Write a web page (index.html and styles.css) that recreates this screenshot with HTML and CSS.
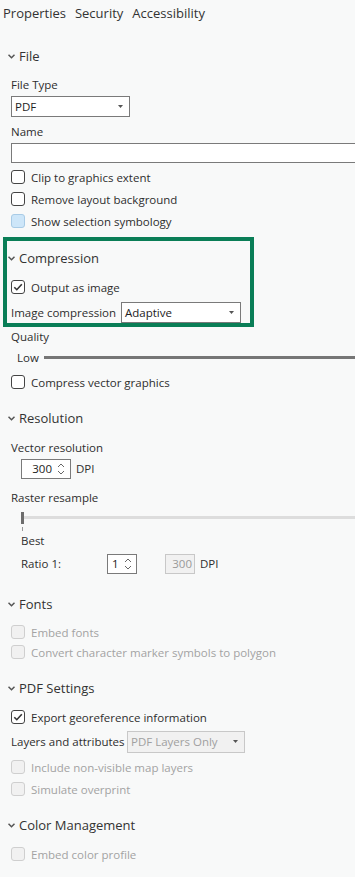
FILE: index.html
```html
<!DOCTYPE html>
<html>
<head>
<meta charset="utf-8">
<link rel="stylesheet" href="styles.css">
</head>
<body>
<div class="tabs"><span>Properties</span><span>Security</span><span>Accessibility</span></div>
<div class="content">

  <div class="heading m-file"><svg class="chev" viewBox="0 0 7 5"><path d="M0.5 0.8 L3.5 3.8 L6.5 0.8"/></svg><span>File</span></div>
  <div class="label m-8">File Type</div>
  <div class="select w-filetype m-3"><span>PDF</span><svg class="arrow" viewBox="0 0 5 3"><path d="M0 0 H5 L2.5 3 Z"/></svg></div>
  <div class="label m-5">Name</div>
  <div class="textinput m-3"></div>
  <div class="check m-3"><span class="box"></span><span>Clip to graphics extent</span></div>
  <div class="check"><span class="box"></span><span>Remove layout background</span></div>
  <div class="check"><span class="box box-blue"></span><span>Show selection symbology</span></div>

  <div class="highlight">
    <div class="heading m-6"><svg class="chev" viewBox="0 0 7 5"><path d="M0.5 0.8 L3.5 3.8 L6.5 0.8"/></svg><span>Compression</span></div>
    <div class="check m-7"><span class="box"><svg class="tick" viewBox="0 0 12 12"><path d="M2.3 6.2 L4.8 8.7 L9.8 3.3"/></svg></span><span>Output as image</span></div>
    <div class="inline m-4"><span class="inline-label w-imgcomp">Image compression</span><div class="select w-adaptive"><span>Adaptive</span><svg class="arrow" viewBox="0 0 5 3"><path d="M0 0 H5 L2.5 3 Z"/></svg></div></div>
  </div>

  <div class="label">Quality</div>
  <div class="lowslider m-1"><span>Low</span><span class="track-dark"></span></div>
  <div class="check m-3"><span class="box"></span><span>Compress vector graphics</span></div>

  <div class="heading m-14"><svg class="chev" viewBox="0 0 7 5"><path d="M0.5 0.8 L3.5 3.8 L6.5 0.8"/></svg><span>Resolution</span></div>
  <div class="label m-9">Vector resolution</div>
  <div class="inline m-2 indent">
    <div class="spin w-spin300"><span>300</span><svg class="updown" viewBox="0 0 8 14"><path d="M1 5 L4 2 L7 5 M1 9 L4 12 L7 9"/></svg></div>
    <span class="unit">DPI</span>
  </div>
  <div class="label m-9">Raster resample</div>
  <div class="rslider m-2"><span class="thumb"></span><span class="track-light"></span></div>
  <div class="tickrow"><span class="tickmark"></span></div>
  <div class="label indent">Best</div>
  <div class="inline m-4 indent">
    <span class="inline-label w-ratio">Ratio 1:</span>
    <div class="spin w-spin1"><span>1</span><svg class="updown" viewBox="0 0 8 14"><path d="M1 5 L4 2 L7 5 M1 9 L4 12 L7 9"/></svg></div>
    <div class="spin spin-disabled w-dis300"><span>300</span></div>
    <span class="unit">DPI</span>
  </div>

  <div class="heading m-19"><svg class="chev" viewBox="0 0 7 5"><path d="M0.5 0.8 L3.5 3.8 L6.5 0.8"/></svg><span>Fonts</span></div>
  <div class="check check-short disabled m-7"><span class="box"></span><span>Embed fonts</span></div>
  <div class="check check-short disabled"><span class="box"></span><span>Convert character marker symbols to polygon</span></div>

  <div class="heading m-15"><svg class="chev" viewBox="0 0 7 5"><path d="M0.5 0.8 L3.5 3.8 L6.5 0.8"/></svg><span>PDF Settings</span></div>
  <div class="check m-7"><span class="box"><svg class="tick" viewBox="0 0 12 12"><path d="M2.3 6.2 L4.8 8.7 L9.8 3.3"/></svg></span><span>Export georeference information</span></div>
  <div class="inline m-3"><span class="inline-label w-layers">Layers and attributes</span><div class="select select-disabled w-layersel"><span>PDF Layers Only</span><svg class="arrow" viewBox="0 0 5 3"><path d="M0 0 H5 L2.5 3 Z"/></svg></div></div>
  <div class="check disabled m-4"><span class="box"></span><span>Include non-visible map layers</span></div>
  <div class="check disabled"><span class="box"></span><span>Simulate overprint</span></div>

  <div class="heading m-14"><svg class="chev" viewBox="0 0 7 5"><path d="M0.5 0.8 L3.5 3.8 L6.5 0.8"/></svg><span>Color Management</span></div>
  <div class="check disabled m-7"><span class="box"></span><span>Embed color profile</span></div>
</div>
</body>
</html>
```

FILE: styles.css
```css
html, body {
  margin: 0;
  padding: 0;
}
body {
  width: 355px;
  height: 877px;
  overflow: hidden;
  background: #f8f9f9;
  font-family: "Open Sans", "Noto Sans", sans-serif;
  font-size: 11.5px;
  color: #2e2e2e;
}
.tabs {
  height: 26px;
  display: flex;
  align-items: center;
  gap: 9px;
  padding-left: 3px;
  font-size: 13px;
  color: #333;
}
.content {
  padding-left: 11px;
}
.heading {
  height: 22px;
  display: flex;
  align-items: center;
  gap: 4px;
  margin-left: -3px;
  font-size: 13px;
  color: #333;
}
.chev {
  width: 7px;
  height: 5px;
  fill: none;
  stroke: #555;
  stroke-width: 1.5;
}
.label {
  height: 18px;
  display: flex;
  align-items: center;
}
.check {
  height: 22px;
  display: flex;
  align-items: center;
  gap: 6px;
}
.check-short {
  height: 20px;
}
.box {
  width: 14px;
  height: 14px;
  box-sizing: border-box;
  border: 1px solid #444;
  border-radius: 3px;
  background: #fff;
  display: flex;
  align-items: center;
  justify-content: center;
  flex: none;
}
.box-blue {
  background: #cde6f9;
  border-color: #a8cbe6;
}
.tick {
  width: 12px;
  height: 12px;
  fill: none;
  stroke: #333;
  stroke-width: 1.6;
}
.disabled {
  color: #a3a3a3;
}
.disabled .box {
  border-color: #cfcfcf;
  background: #f1f1f1;
}
.select {
  height: 21px;
  box-sizing: border-box;
  border: 1px solid #7a7a7a;
  background: #fff;
  display: flex;
  align-items: center;
  justify-content: space-between;
  padding: 0 6px 0 3px;
  color: #222;
}
.select-disabled {
  background: #f1f1f1;
  border-color: #c8c8c8;
  color: #a0a0a0;
}
.arrow {
  width: 5px;
  height: 3px;
  fill: #555;
}
.w-filetype { width: 119px; }
.w-adaptive { width: 120px; }
.w-layersel { width: 118px; height: 22px; }
.textinput {
  width: 360px;
  height: 20px;
  box-sizing: border-box;
  border: 1px solid #7a7a7a;
  background: #fff;
}
.highlight {
  margin-top: 5px;
  margin-left: -8px;
  width: 251px;
  box-sizing: border-box;
  border: 4px solid #0a7e57;
  padding-left: 4px;
}
.inline {
  display: flex;
  align-items: center;
  height: 21px;
}
.inline-label { flex: none; }
.w-imgcomp { width: 110px; }
.w-layers { width: 116px; }
.w-ratio { width: 86px; }
.lowslider {
  height: 22px;
  display: flex;
  align-items: center;
  gap: 5px;
  padding-left: 6px;
}
.track-dark {
  flex: 1;
  height: 3px;
  background: #767676;
}
.indent { padding-left: 10px; }
.spin {
  height: 20px;
  box-sizing: border-box;
  border: 1px solid #7a7a7a;
  background: #fff;
  display: flex;
  align-items: center;
  justify-content: flex-end;
  gap: 5px;
  padding-right: 5px;
  color: #222;
}
.spin-disabled {
  background: #f1f1f1;
  border-color: #c8c8c8;
  color: #999;
  padding-right: 2px;
  margin-left: 28px;
}
.updown {
  width: 8px;
  height: 14px;
  fill: none;
  stroke: #666;
  stroke-width: 1;
}
.w-spin300 { width: 50px; }
.w-spin1 { width: 30px; justify-content: space-between; padding-left: 4px; padding-right: 4px; }
.w-dis300 { width: 30px; }
.unit { margin-left: 5px; }
.rslider {
  height: 19px;
  display: flex;
  align-items: center;
  padding-left: 10px;
}
.thumb {
  width: 3px;
  height: 12px;
  background: #6d6d6d;
  flex: none;
}
.track-light {
  flex: 1;
  height: 3px;
  background: #dddddd;
}
.tickrow {
  height: 4px;
  padding-left: 11px;
}
.tickmark {
  display: block;
  width: 1px;
  height: 4px;
  background: #999;
}
.m-file { margin-top: 19px; }
.m-1 { margin-top: 1px; }
.m-2 { margin-top: 2px; }
.m-3 { margin-top: 3px; }
.m-4 { margin-top: 4px; }
.m-5 { margin-top: 5px; }
.m-6 { margin-top: 6px; }
.m-7 { margin-top: 7px; }
.m-8 { margin-top: 8px; }
.m-9 { margin-top: 9px; }
.m-10 { margin-top: 10px; }
.m-14 { margin-top: 14px; }
.m-15 { margin-top: 15px; }
.m-19 { margin-top: 19px; }
```
